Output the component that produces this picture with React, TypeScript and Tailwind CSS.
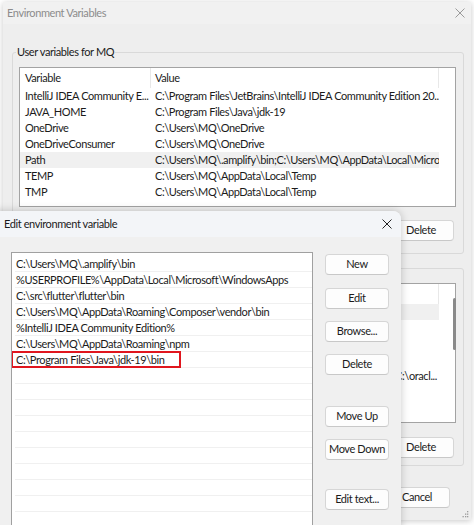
import React from "react";

const userVars: [string, string][] = [
  ["IntelliJ IDEA Community E...", "C:\\Program Files\\JetBrains\\IntelliJ IDEA Community Edition 20..."],
  ["JAVA_HOME", "C:\\Program Files\\Java\\jdk-19"],
  ["OneDrive", "C:\\Users\\MQ\\OneDrive"],
  ["OneDriveConsumer", "C:\\Users\\MQ\\OneDrive"],
  ["Path", "C:\\Users\\MQ\\.amplify\\bin;C:\\Users\\MQ\\AppData\\Local\\Micro..."],
  ["TEMP", "C:\\Users\\MQ\\AppData\\Local\\Temp"],
  ["TMP", "C:\\Users\\MQ\\AppData\\Local\\Temp"],
];

const systemVars: [string, string][] = [
  ["ComSpec", "C:\\WINDOWS\\system32\\cmd.exe"],
  ["DriverData", "C:\\Windows\\System32\\Drivers\\DriverData"],
  ["NUMBER_OF_PROCESSORS", "8"],
  ["OS", "Windows_NT"],
  ["Path", "C:\\Program Files\\Common Files\\Oracle\\Java\\javapath;C:\\oracl..."],
  ["PATHEXT", ".COM;.EXE;.BAT;.CMD;.VBS;.VBE;.JS"],
  ["PROCESSOR_ARCHITECTURE", "AMD64"],
];

const paths = [
  "C:\\Users\\MQ\\.amplify\\bin",
  "%USERPROFILE%\\AppData\\Local\\Microsoft\\WindowsApps",
  "C:\\src\\flutter\\flutter\\bin",
  "C:\\Users\\MQ\\AppData\\Roaming\\Composer\\vendor\\bin",
  "%IntelliJ IDEA Community Edition%",
  "C:\\Users\\MQ\\AppData\\Roaming\\npm",
  "C:\\Program Files\\Java\\jdk-19\\bin",
];

const CloseIcon = ({ color }: { color: string }) => (
  <svg width="10" height="10" viewBox="0 0 10 10">
    <path d="M0.5 0.5 L9.5 9.5 M9.5 0.5 L0.5 9.5" stroke={color} strokeWidth="1" fill="none" />
  </svg>
);

const WinButton = ({ label, className = "" }: { label: string; className?: string }) => (
  <div
    className={`h-[21px] flex items-center justify-center bg-[#fdfdfd] border border-[#d6d6d6] border-b-[#c8c8c8] rounded-[4px] whitespace-nowrap ${className}`}
  >
    {label}
  </div>
);

const VarList = ({
  rows,
  selected,
  endAligned = -1,
}: {
  rows: [string, string][];
  selected: number;
  endAligned?: number;
}) => (
  <div className="ml-[3px] h-[140px] w-[437px] bg-white border border-[#a3a3a3] flex overflow-hidden">
    <div className="w-[419px] flex flex-col">
      <div className="h-[20px] flex shrink-0">
        <div className="w-[131px] pl-[5px] flex items-center border-r border-[#e8e8e8]">Variable</div>
        <div className="w-[288px] pl-[4px] flex items-center border-r border-[#e8e8e8]">Value</div>
      </div>
      {rows.map(([name, value], i) => (
        <div key={i} className={`h-[16px] flex shrink-0 ${i === selected ? "bg-[#f0f0f0]" : ""}`}>
          <div className="w-[131px] pl-[5px] whitespace-nowrap overflow-hidden leading-[16px]">{name}</div>
          <div
            className={`w-[288px] pl-[4px] pr-[2px] flex whitespace-nowrap overflow-hidden leading-[16px] ${
              i === endAligned ? "justify-end" : ""
            }`}
          >
            <span className="shrink-0">{value}</span>
          </div>
        </div>
      ))}
    </div>
    <div className="flex-1" />
  </div>
);

export default function App() {
  return (
    <div className="relative w-[474px] h-[525px] overflow-hidden bg-white font-['Lato',sans-serif] text-[11px] tracking-[-0.4px] text-[#1b1b1b]">
      {/* Environment Variables window (inactive, behind) */}
      <div className="relative ml-[3px] mt-[2px] w-[468px] h-[518px] bg-[#eeeeee] flex flex-col shadow-[0_1px_6px_rgba(0,0,0,0.22)]">
        <div className="h-[22px] flex items-center justify-between pl-[4px] pr-[6px] bg-[#f1f1f1] text-[#8c8c8c]">
          <span>Environment Variables</span>
          <CloseIcon color="#9a9a9a" />
        </div>

        <fieldset className="mt-[20px] ml-[9px] mr-[7px] border border-[#d9d9d9] rounded-[3px] pl-[3px] pb-[12px]">
          <legend className="px-[1px] leading-[16px]">User variables for MQ</legend>
          <div className="mt-[7px]">
            <VarList rows={userVars} selected={4} />
          </div>
          <div className="mt-[13px] mr-[9px] flex justify-end gap-[8px]">
            <WinButton label="New..." className="w-[66px]" />
            <WinButton label="Edit..." className="w-[66px]" />
            <WinButton label="Delete" className="w-[66px]" />
          </div>
        </fieldset>

        <fieldset className="mt-[6px] ml-[9px] mr-[7px] border border-[#d9d9d9] rounded-[3px] pl-[3px] pb-[7px]">
          <legend className="px-[1px] leading-[16px]">System variables</legend>
          <div className="mt-[7px] relative">
            <VarList rows={systemVars} selected={0} endAligned={4} />
            <div className="absolute right-[7px] top-[15px] w-[3px] h-[52px] rounded-full bg-[#8a8a8a]" />
          </div>
          <div className="mt-[14px] mr-[9px] flex justify-end gap-[8px]">
            <WinButton label="New..." className="w-[66px]" />
            <WinButton label="Edit..." className="w-[66px]" />
            <WinButton label="Delete" className="w-[66px]" />
          </div>
        </fieldset>

        <div className="mt-[21px] pr-[21px] flex justify-end gap-[8px]">
          <WinButton label="OK" className="w-[66px]" />
          <WinButton label="Cancel" className="w-[66px]" />
        </div>

        <svg className="absolute right-[2px] bottom-[2px]" width="7" height="7" viewBox="0 0 7 7">
          <g fill="#9c9c9c">
            <rect x="5" y="0" width="1.3" height="1.3" />
            <rect x="3" y="2.5" width="1.3" height="1.3" />
            <rect x="5" y="2.5" width="1.3" height="1.3" />
            <rect x="0.5" y="5" width="1.3" height="1.3" />
            <rect x="3" y="5" width="1.3" height="1.3" />
            <rect x="5" y="5" width="1.3" height="1.3" />
          </g>
        </svg>
      </div>

      {/* Edit environment variable window (active, on top) */}
      <div className="absolute left-[-6px] top-[211px] w-[407px] h-[330px] bg-[#f0f0f0] rounded-tr-[8px] shadow-[0_0_8px_rgba(0,0,0,0.22)] flex flex-col">
        <div className="h-[26px] shrink-0 flex items-center justify-between pl-[10px] pr-[9px] rounded-tr-[8px] bg-[#f3f5f8]">
          <span>Edit environment variable</span>
          <CloseIcon color="#222222" />
        </div>
        <div className="flex pl-[17px] pt-[15px]">
          <div className="w-[302px] h-[300px] bg-white border border-[#a0a0a0] overflow-hidden pt-[3px]">
            {Array.from({ length: 18 }).map((_, i) => (
              <div key={i} className="relative ml-[3px] h-[16px] border-b border-[#f0f0f0] pl-[1px] leading-[15px] whitespace-nowrap">
                {paths[i] ?? ""}
                {i === 6 && (
                  <div className="absolute left-[-4px] top-[-1px] w-[170px] h-[17px] border-2 border-[#e0161e]" />
                )}
              </div>
            ))}
          </div>
          <div className="ml-[12px] w-[64px] flex flex-col">
            <WinButton label="New" className="mt-[2px]" />
            <WinButton label="Edit" className="mt-[13px]" />
            <WinButton label="Browse..." className="mt-[12px]" />
            <WinButton label="Delete" className="mt-[12px]" />
            <WinButton label="Move Up" className="mt-[31px]" />
            <WinButton label="Move Down" className="mt-[12px]" />
            <WinButton label="Edit text..." className="mt-[29px]" />
          </div>
        </div>
      </div>
    </div>
  );
}
